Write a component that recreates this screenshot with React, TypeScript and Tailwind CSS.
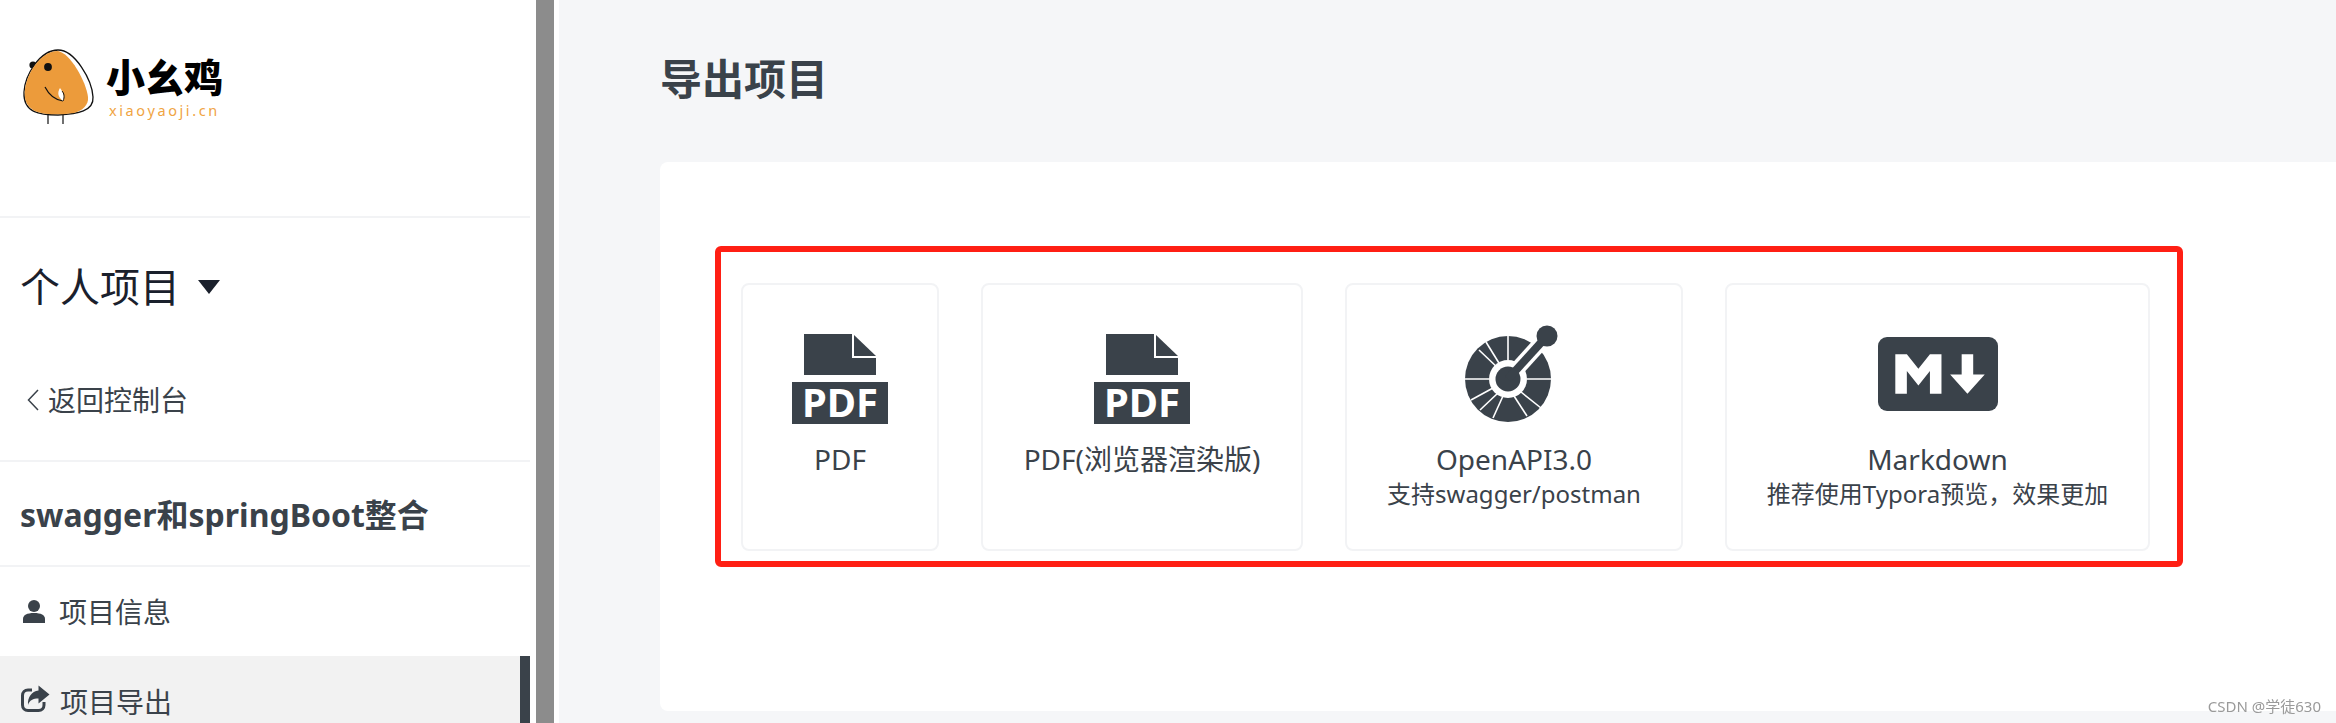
const FONT = "[font-family:'Noto_Sans','Noto_Sans_CJK_SC',sans-serif]";

function BirdLogo() {
    return (
        <svg width="80" height="82" viewBox="0 0 80 82" fill="none">
            <circle cx="13" cy="20" r="3.6" fill="#111" />
            <path d="M38 5C55 5 72 35 73 52C74 66 58 69 38 70C20 70 3 68 4 47C5 30 20 5 38 5Z" fill="#fff" stroke="#111" strokeWidth="1.3" />
            <path d="M38 6C50 8 66 36 68 52C69 60 62 66 54 68C48 69 43 69.3 38 69.3C20 69.3 4 67 4.7 47C5.5 30 20 6 38 6Z" fill="#ec9b3b" />
            <circle cx="28" cy="22" r="3.9" fill="#111" />
            <path d="M25 42C29 50 36 55 43 56" stroke="#111" strokeWidth="1.2" />
            <path d="M40 43C37 48 38 52 43 56C45 52 43 47 40 43Z" fill="#fff" />
            <path d="M43 56C45 52 44 48 42 46" stroke="#111" strokeWidth="1" />
            <path d="M28 70V79M43 70V79" stroke="#111" strokeWidth="1.2" />
        </svg>
    );
}

function ShareIcon() {
    return (
        <svg width="30" height="28" viewBox="0 0 30 28">
            <path d="M12 5H8C4.7 5 2.5 7.2 2.5 10.5V20C2.5 23.3 4.7 25.5 8 25.5H18.5C21.8 25.5 24 23.3 24 20V17" fill="none" stroke="#3a424a" strokeWidth="3" />
            <path d="M18.5 0.5L29.5 9.5L18.5 18.5V13.5C13 13.5 9.5 15 8 20C7.5 12 11.5 6.5 18.5 5.5Z" fill="#3a424a" />
        </svg>
    );
}

function PdfIcon() {
    return (
        <svg width="96" height="112" viewBox="0 0 96 112">
            <path d="M12 10H60V34H84V51H12Z" fill="#3a424a" />
            <path d="M62 11L84 32H62Z" fill="#3a424a" />
            <rect x="0" y="58" width="96" height="42" fill="#3a424a" />
            <text x="48" y="93" textAnchor="middle" fontSize="40" fontWeight="700" fill="#fff" textLength="76" lengthAdjust="spacingAndGlyphs" fontFamily="'Noto Sans', sans-serif">
                PDF
            </text>
        </svg>
    );
}

function OpenApiIcon() {
    // hub is at 43,55 in this box, the knob sits top right
    return (
        <svg width="98" height="100" viewBox="0 0 98 100">
            <circle cx="43" cy="55" r="43" fill="#3a424a" />
            <g stroke="#fff" strokeWidth="1.6">
                <path d="M43 12V36" />
                <path d="M0 55H24M62 55H86" />
                <path d="M14 26L35 46" />
                <path d="M21 18L37 44" />
                <path d="M6 76L28 64" />
                <path d="M15 86L34 68" />
                <path d="M28 94L38 72" />
                <path d="M62 92L49 72" />
                <path d="M76 84L56 68" />
            </g>
            <circle cx="43" cy="55" r="19" fill="#fff" />
            <path d="M43 55L82 12" stroke="#fff" strokeWidth="15" />
            <circle cx="43" cy="55" r="12.5" fill="#3a424a" />
            <path d="M43 55L82 12" stroke="#3a424a" strokeWidth="8" />
            <circle cx="82" cy="12" r="10.5" fill="#3a424a" />
        </svg>
    );
}

function MarkdownIcon() {
    return (
        <svg width="120" height="100" viewBox="0 0 120 100">
            <rect x="0" y="13" width="120" height="74" rx="9" fill="#3a424a" />
            <g transform="translate(0 13) scale(0.577 0.578)">
                <path d="M30 98V30h20l20 25 20-25h20v68H90V59L70 84 50 59v39zm125 0l-30-33h20V30h20v35h20z" fill="#fff" />
            </g>
        </svg>
    );
}

const CARDS = [
    { width: "w-[198px]", icon: <PdfIcon />, title: "PDF", sub: "" },
    { width: "w-[322px]", icon: <PdfIcon />, title: "PDF(浏览器渲染版)", sub: "" },
    { width: "w-[338px]", icon: <OpenApiIcon />, title: "OpenAPI3.0", sub: "支持swagger/postman" },
    { width: "w-[425px]", icon: <MarkdownIcon />, title: "Markdown", sub: "推荐使用Typora预览，效果更加" },
];

export default function App() {
    return (
        <div className={`flex h-[723px] w-[2336px] overflow-hidden bg-white text-[#3a424a] ${FONT}`}>
            <aside className="flex w-[530px] shrink-0 flex-col">
                <div className="flex h-[218px] items-start gap-[6px] border-b-2 border-[#f2f3f5] pl-[20px] pt-[45px]">
                    <BirdLogo />
                    <div className="flex flex-col pt-[9px]">
                        <span className="h-[46px] text-[39px] leading-[46px] font-black text-black">小幺鸡</span>
                        <span className="mt-[1px] pl-[3px] text-[14.5px] leading-[18px] tracking-[2.6px] text-[#f0a443]">xiaoyaoji.cn</span>
                    </div>
                </div>

                <div className="flex h-[245px] flex-col border-b-2 border-[#f2f3f5] pl-[20px]">
                    <div className="flex h-[138px] items-center gap-[18px] text-[40px] text-[#1a202c]">
                        <span>个人项目</span>
                        <span className="h-0 w-0 border-x-[11px] border-t-[14px] border-x-transparent border-t-[#1a202c]" />
                    </div>
                    <div className="flex h-[88px] items-center gap-[9px] pl-[7px] text-[28px]">
                        <svg width="12" height="22" viewBox="0 0 12 22" fill="none" stroke="#3a424a" strokeWidth="1.5">
                            <path d="M11 1L1.5 11L11 21" />
                        </svg>
                        <span>返回控制台</span>
                    </div>
                </div>

                <div className="flex h-[105px] items-center border-b-2 border-[#f2f3f5] pl-[20px] pt-[2px] text-[32px] font-bold">
                    swagger和springBoot整合
                </div>

                <div className="flex h-[89px] items-center gap-[14px] pl-[23px] text-[28px]">
                    <svg width="22" height="23" viewBox="0 0 22 23" fill="#3a424a">
                        <circle cx="11" cy="6" r="6" />
                        <path d="M0 23V19C0 15 4 13 11 13C18 13 22 15 22 19V23Z" />
                    </svg>
                    <span>项目信息</span>
                </div>

                <div className="flex flex-1 items-start gap-[10px] border-r-[10px] border-[#3a424a] bg-[#f2f2f2] pl-[20px] pt-[29px] text-[28px]">
                    <ShareIcon />
                    <span className="-mt-[4px]">项目导出</span>
                </div>
            </aside>

            <div className="ml-[6px] w-[18px] shrink-0 bg-[#8c8c8c]" />

            <main className="ml-[5px] flex min-w-0 flex-1 flex-col bg-[#f5f6f8] pb-[12px] pl-[101px]">
                <h1 className="flex h-[162px] shrink-0 items-center pb-[6px] text-[42px] font-bold">导出项目</h1>
                <div className="flex-1 rounded-l-[8px] bg-white pl-[55px] pt-[84px]">
                    <div className="flex h-[321px] w-[1468px] gap-[42px] rounded-[6px] border-[6px] border-[#ff1f14] pl-[20px] pt-[31px]">
                        {CARDS.map((card, i) => (
                            <div
                                key={i}
                                className={`flex h-[268px] shrink-0 flex-col items-center rounded-[8px] border-2 border-[#f2f3f5] pt-[38px] ${card.width}`}
                            >
                                <div className="flex h-[102px] items-start justify-center pt-[1px]">{card.icon}</div>
                                <div className="mt-[15px] text-[28px] leading-[38px]">{card.title}</div>
                                {card.sub && <div className="text-[24px] leading-[32px]">{card.sub}</div>}
                            </div>
                        ))}
                    </div>
                </div>
            </main>

            <div className="fixed bottom-[6px] right-[15px] text-[15px] text-[#9a9a9a]">CSDN @学徒630</div>
        </div>
    );
}
